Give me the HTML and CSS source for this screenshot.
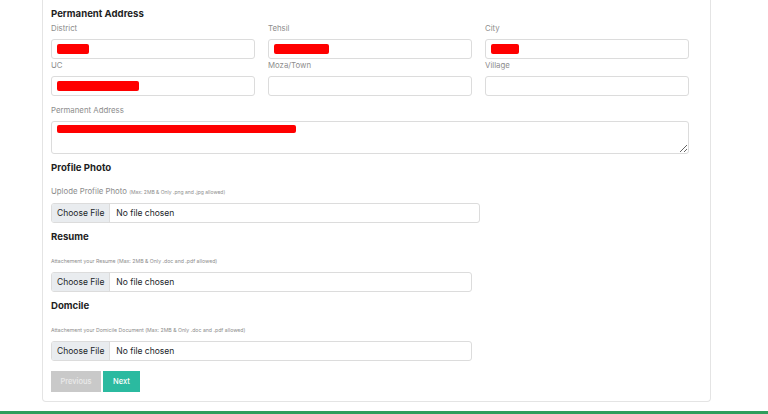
FILE: index.html
```html
<!DOCTYPE html>
<html lang="en">
<head>
    <meta charset="UTF-8">
    <meta name="viewport" content="width=device-width, initial-scale=1.0">
    <title>Application Form</title>
    <link rel="stylesheet" href="styles.css">
</head>
<body>
    <main class="card">
        <h2 class="section-title">Permanent Address</h2>
        <div class="grid">
            <div class="field">
                <label>District</label>
                <div class="input"><span class="redact" style="width: 32px"></span></div>
            </div>
            <div class="field">
                <label>Tehsil</label>
                <div class="input"><span class="redact" style="width: 55px"></span></div>
            </div>
            <div class="field">
                <label>City</label>
                <div class="input"><span class="redact" style="width: 28px"></span></div>
            </div>
            <div class="field">
                <label>UC</label>
                <div class="input"><span class="redact" style="width: 82px"></span></div>
            </div>
            <div class="field">
                <label>Moza/Town</label>
                <div class="input"></div>
            </div>
            <div class="field">
                <label>Village</label>
                <div class="input"></div>
            </div>
        </div>
        <div class="field address">
            <label>Permanent Address</label>
            <div class="textarea-wrap">
                <textarea></textarea>
                <span class="redact over" style="width: 239px"></span>
            </div>
        </div>

        <h2 class="section-title upload-title">Profile Photo</h2>
        <label class="upload-label">Uplode Profile Photo <small>(Max: 2MB &amp; Only .png and .jpg allowed)</small></label>
        <input type="file" class="file wide">

        <h2 class="section-title upload-title">Resume</h2>
        <label class="upload-label tiny">Attachement your Resume (Max: 2MB &amp; Only .doc and .pdf allowed)</label>
        <input type="file" class="file">

        <h2 class="section-title upload-title">Domcile</h2>
        <label class="upload-label tiny">Attachement your Domicile Document (Max: 2MB &amp; Only .doc and .pdf allowed)</label>
        <input type="file" class="file">

        <div class="actions">
            <button class="btn prev" disabled>Previous</button>
            <button class="btn next">Next</button>
        </div>
    </main>
    <footer class="bar"></footer>
</body>
</html>
```

FILE: styles.css
```css
body {
    font-family: Inter, "Noto Sans", sans-serif;
    margin: 0;
    padding: 0;
    background-color: #fff;
    color: #212529;
}
.card {
    margin: 0 57px 0 42px;
    padding: 7px 21px 9px 8px;
    border: 1px solid #e4e4e4;
    border-top: none;
    border-radius: 0 0 4px 4px;
}
.section-title {
    font-size: 9.6px;
    line-height: 14px;
    font-weight: 700;
    margin: 0;
    color: #1e1e1e;
}
.grid {
    display: grid;
    grid-template-columns: repeat(3, 1fr);
    column-gap: 13px;
    margin-top: 1px;
}
.field label,
.upload-label {
    display: block;
    font-size: 7.8px;
    line-height: 12px;
    color: #8d8d8d;
    margin-bottom: 5px;
}
.input {
    box-sizing: border-box;
    height: 20px;
    border: 1px solid #dcdcdc;
    border-radius: 3px;
    padding: 3px 5px;
    display: flex;
    align-items: center;
}
.redact {
    display: inline-block;
    height: 10px;
    background: #f00;
    border-radius: 2px;
}
.address {
    margin-top: 8px;
}
.textarea-wrap {
    position: relative;
}
textarea {
    display: block;
    box-sizing: border-box;
    width: 100%;
    height: 33px;
    border: 1px solid #dcdcdc;
    border-radius: 3px;
    margin: 0;
}
.over {
    position: absolute;
    left: 6px;
    top: 4px;
    height: 8px;
}
.upload-title {
    margin-top: 7px;
}
.upload-label {
    margin-top: 10px;
    margin-bottom: 5px;
}
.upload-label small {
    font-size: 5px;
}
.tiny {
    font-size: 5.2px;
    margin-top: 11px;
    margin-bottom: 5px;
}
.file {
    display: block;
    box-sizing: border-box;
    width: 421px;
    height: 20px;
    font-family: Inter, "Noto Sans", sans-serif;
    font-size: 8.5px;
    color: #212529;
    border: 1px solid #dcdcdc;
    border-radius: 3px;
    margin: 0 0 7px;
    padding: 0;
    overflow: hidden;
}
.file.wide {
    width: 429px;
}
.file::file-selector-button {
    height: 18px;
    font: inherit;
    color: #212529;
    background-color: #e9ecef;
    border: none;
    border-right: 1px solid #dcdcdc;
    padding: 0 5px;
    margin: 0 6px 0 0;
}
.actions {
    display: flex;
    gap: 2px;
    margin-top: 10px;
}
.btn {
    font-family: Inter, "Noto Sans", sans-serif;
    font-size: 7.5px;
    font-weight: 500;
    height: 21px;
    border: none;
    border-radius: 0;
    color: #fff;
    cursor: pointer;
}
.prev {
    width: 50px;
    background-color: #c9c9c9;
    color: #e9e9e9;
}
.next {
    width: 37px;
    background-color: #2bbaa0;
}
.bar {
    height: 4px;
    margin-top: 9px;
    background-color: #2f9d5c;
}
```
